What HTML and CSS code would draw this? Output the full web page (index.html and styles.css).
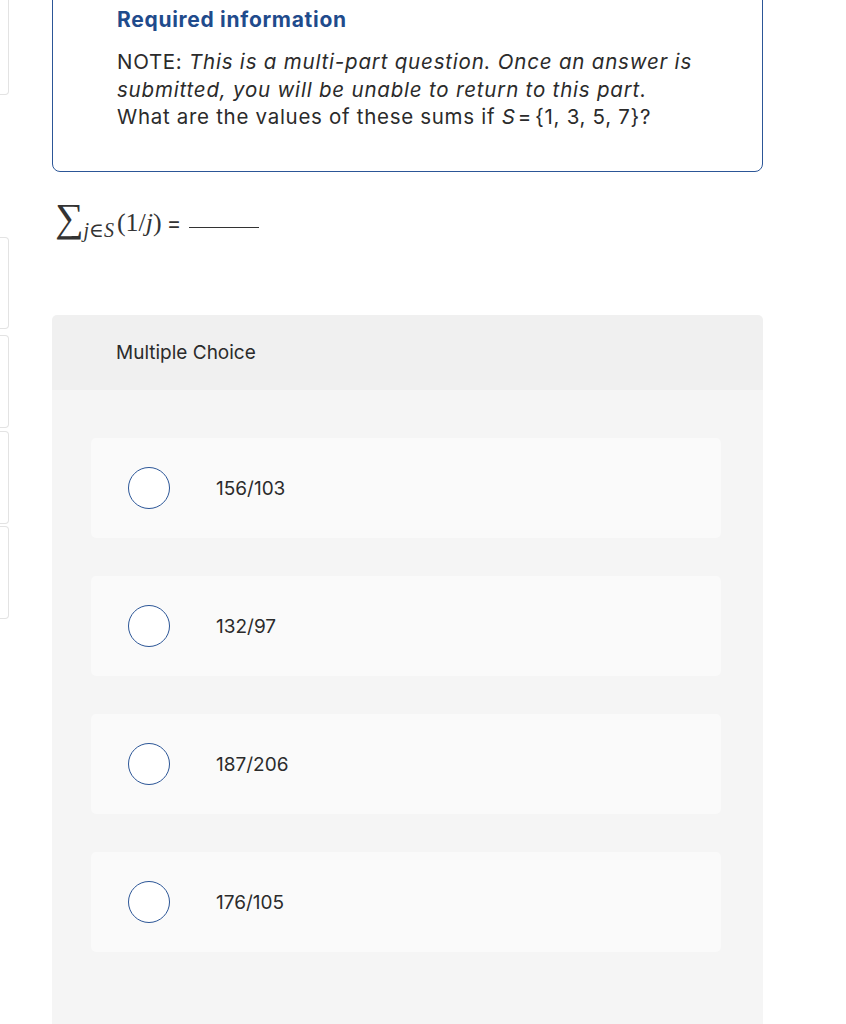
FILE: index.html
```html
<!DOCTYPE html>
<html lang="en">
<head>
<meta charset="utf-8">
<title>Required information</title>
<link rel="stylesheet" href="styles.css">
</head>
<body>
<div class="page">
  <div class="rail">
    <div class="tab tab-first"></div>
    <div class="tab tab-2"></div>
    <div class="tab tab-3"></div>
    <div class="tab tab-4"></div>
    <div class="tab tab-5"></div>
  </div>
  <main class="main">
    <section class="required">
      <h2 class="req-title">Required information</h2>
      <p class="req-text">NOTE: <em>This is a multi-part question. Once an answer is<br>submitted, you will be unable to return to this part.</em><br>What are the values of these sums if <em class="var">S</em><span class="op">=</span>{1, 3, 5, 7}?</p>
    </section>
    <div class="formula">
      <span class="sigma">&sum;</span><span class="sub"><i>j</i>&isin;<i>S</i></span><span class="expr">(1/<i>j</i>)</span><span class="eq">=</span><span class="blank"></span>
    </div>
    <section class="mc">
      <div class="mc-head">Multiple Choice</div>
      <div class="mc-body">
        <div class="option"><span class="radio"></span><span class="opt-text">156/103</span></div>
        <div class="option"><span class="radio"></span><span class="opt-text">132/97</span></div>
        <div class="option"><span class="radio"></span><span class="opt-text">187/206</span></div>
        <div class="option"><span class="radio"></span><span class="opt-text">176/105</span></div>
      </div>
    </section>
  </main>
</div>
</body>
</html>
```
FILE: styles.css
```css
html, body {
  margin: 0;
  padding: 0;
  background: #ffffff;
}
body {
  font-family: "Inter", "Open Sans", sans-serif;
  color: #2b2b2b;
  overflow: hidden;
  height: 1024px;
}
.page {
  display: flex;
  align-items: flex-start;
}
.rail {
  width: 9px;
  flex: none;
  display: flex;
  flex-direction: column;
}
.tab {
  box-sizing: border-box;
  width: 9px;
  border: 1px solid #e3e3e3;
  border-left: none;
  border-radius: 0 4px 4px 0;
}
.tab-first { height: 105px; margin-top: -10px; }
.tab-2 { height: 92px; margin-top: 142px; }
.tab-3 { height: 93px; margin-top: 6px; }
.tab-4 { height: 93px; margin-top: 3px; }
.tab-5 { height: 93px; margin-top: 2px; }

.main {
  margin-left: 43px;
  width: 711px;
  flex: none;
  display: flex;
  flex-direction: column;
}
.required {
  box-sizing: border-box;
  margin-top: -20px;
  border: 1.5px solid #2c5697;
  border-radius: 8px;
  padding: 25px 20px 0 64px;
  height: 192px;
}
.req-title {
  margin: 0;
  font-size: 21px;
  line-height: 28px;
  font-weight: 700;
  letter-spacing: 0.7px;
  color: #1f4b8c;
}
.req-text {
  margin: 14px 0 0;
  font-size: 20.5px;
  line-height: 27.5px;
  letter-spacing: 0.7px;
  color: #2b2b2b;
  white-space: nowrap;
}
.req-text em {
  letter-spacing: 0.8px;
}
.req-text .var {
  letter-spacing: 0;
}
.op {
  margin: 0 3px;
}
.formula {
  margin: 26px 0 0 3px;
  display: flex;
  align-items: baseline;
  font-family: "Liberation Serif", "DejaVu Serif", serif;
  font-size: 26px;
  color: #333;
  height: 43px;
}
.sigma {
  font-size: 40px;
  line-height: 1;
}
.sub {
  font-size: 20px;
  position: relative;
  top: 6px;
  margin-right: 3px;
}
.expr {
  margin-right: 5px;
}
.eq {
  font-family: "Inter", sans-serif;
  font-size: 22px;
  margin-right: 8px;
}
.blank {
  width: 70px;
  border-bottom: 1px solid #333;
  align-self: flex-end;
  margin-bottom: 13px;
}
.mc {
  margin-top: 74px;
  border-radius: 5px 5px 0 0;
  overflow: hidden;
}
.mc-head {
  background: #f0f0f0;
  height: 75px;
  box-sizing: border-box;
  padding-left: 64px;
  display: flex;
  align-items: center;
  font-size: 19px;
  color: #2b2b2b;
}
.mc-body {
  background: #f5f5f5;
  padding: 48px 42px 100px 39px;
  display: flex;
  flex-direction: column;
  gap: 38px;
}
.option {
  background: #fafafa;
  border-radius: 5px;
  height: 100px;
  display: flex;
  align-items: center;
  padding-left: 37px;
}
.radio {
  box-sizing: border-box;
  width: 42px;
  height: 42px;
  border-radius: 50%;
  border: 1.5px solid #2c5697;
  background: #ffffff;
  flex: none;
}
.opt-text {
  margin-left: 46px;
  font-size: 19px;
  color: #2b2b2b;
}
```
